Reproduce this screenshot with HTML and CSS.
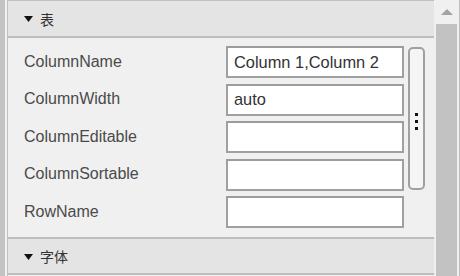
FILE: index.html
```html
<!DOCTYPE html>
<html lang="zh">
<head>
  <meta charset="UTF-8">
  <title>属性</title>
  <link rel="stylesheet" href="styles.css">
</head>
<body>
  <div class="frame">
    <div class="gutter"></div>

    <div class="panel">
      <!-- 表 section -->
      <div class="section-head">
        <svg class="caret" width="9" height="6" viewBox="0 0 9 6"><path d="M0 0H9L4.5 6Z" fill="#111"/></svg>
        <span>表</span>
      </div>
      <div class="fields">
        <label class="name">ColumnName</label>
        <input class="value" type="text" value="Column 1,Column 2">
        <div class="expander">
          <span class="dots"><i></i><i></i><i></i></span>
        </div>

        <label class="name">ColumnWidth</label>
        <input class="value" type="text" value="auto">

        <label class="name">ColumnEditable</label>
        <input class="value" type="text" value="">

        <label class="name">ColumnSortable</label>
        <input class="value" type="text" value="">

        <label class="name">RowName</label>
        <input class="value" type="text" value="">
      </div>

      <!-- 字体 section -->
      <div class="section-head">
        <svg class="caret" width="9" height="6" viewBox="0 0 9 6"><path d="M0 0H9L4.5 6Z" fill="#111"/></svg>
        <span>字体</span>
      </div>
    </div>

    <div class="scrollbar">
      <div class="arrow"></div>
      <div class="thumb"></div>
    </div>
    <div class="edge"></div>
  </div>
</body>
</html>
```

FILE: styles.css
```css
body {
  margin: 0;
  width: 460px;
  height: 276px;
  overflow: hidden;
  background-color: #f0f0f0;
  font-family: 'Liberation Sans', Arial, 'Noto Sans CJK SC', sans-serif;
  color: #444;
}
.frame {
  display: flex;
  height: 276px;
}
.gutter {
  width: 5px;
  margin-right: 2px;
  background-color: #c3c3c3;
}
.panel {
  width: 426px;
  border-left: 1px solid #c0c0c0;
  border-top: 1px solid #c0c0c0;
}
.section-head {
  display: flex;
  align-items: center;
  height: 35px;
  padding-left: 16px;
  background-color: #e4e4e4;
  border-bottom: 2px solid #bdbdbd;
  font-size: 14px;
  color: #333;
}
.fields + .section-head {
  border-top: 2px solid #bdbdbd;
  height: 34px;
}
.caret {
  margin-right: 7px;
  margin-top: 1px;
}
.fields {
  display: grid;
  grid-template-columns: 202px 178px 17px;
  grid-auto-rows: 32px;
  row-gap: 5.5px;
  padding: 8px 0 9px 16px;
}
.name {
  grid-column: 1;
  display: flex;
  align-items: center;
  padding-bottom: 1px;
  font-size: 16px;
  color: #4a4a4a;
}
.value {
  grid-column: 2;
  box-sizing: border-box;
  width: 178px;
  height: 32px;
  margin: 0;
  padding: 0 6px;
  border: 2px solid #a0a0a0;
  border-top-color: #9c9c9c;
  background-color: #fff;
  font-family: inherit;
  font-size: 16.4px;
  color: #333;
  outline: none;
}
.expander {
  grid-column: 3;
  grid-row: 1 / span 4;
  margin: 1px 0 1px 4px;
  width: 17px;
  box-sizing: border-box;
  border: 2px solid #a0a0a0;
  border-radius: 5px;
  background-color: #f5f5f5;
  display: flex;
  align-items: center;
  justify-content: center;
}
.dots {
  display: flex;
  flex-direction: column;
  gap: 4px;
  margin-top: 6px;
}
.dots i {
  display: block;
  width: 3px;
  height: 3px;
  background-color: #111;
}
.scrollbar {
  width: 21px;
  margin-left: 2px;
  display: flex;
  flex-direction: column;
  align-items: center;
}
.arrow {
  width: 0;
  height: 0;
  margin-top: 9px;
  border-left: 6px solid transparent;
  border-right: 6px solid transparent;
  border-bottom: 6px solid #a3a3a3;
}
.thumb {
  width: 21px;
  flex: 1;
  margin-top: 9px;
  background-color: #c2c2c2;
}
.edge {
  width: 1px;
  margin-left: 2px;
  background-color: #c0c0c0;
}
```
